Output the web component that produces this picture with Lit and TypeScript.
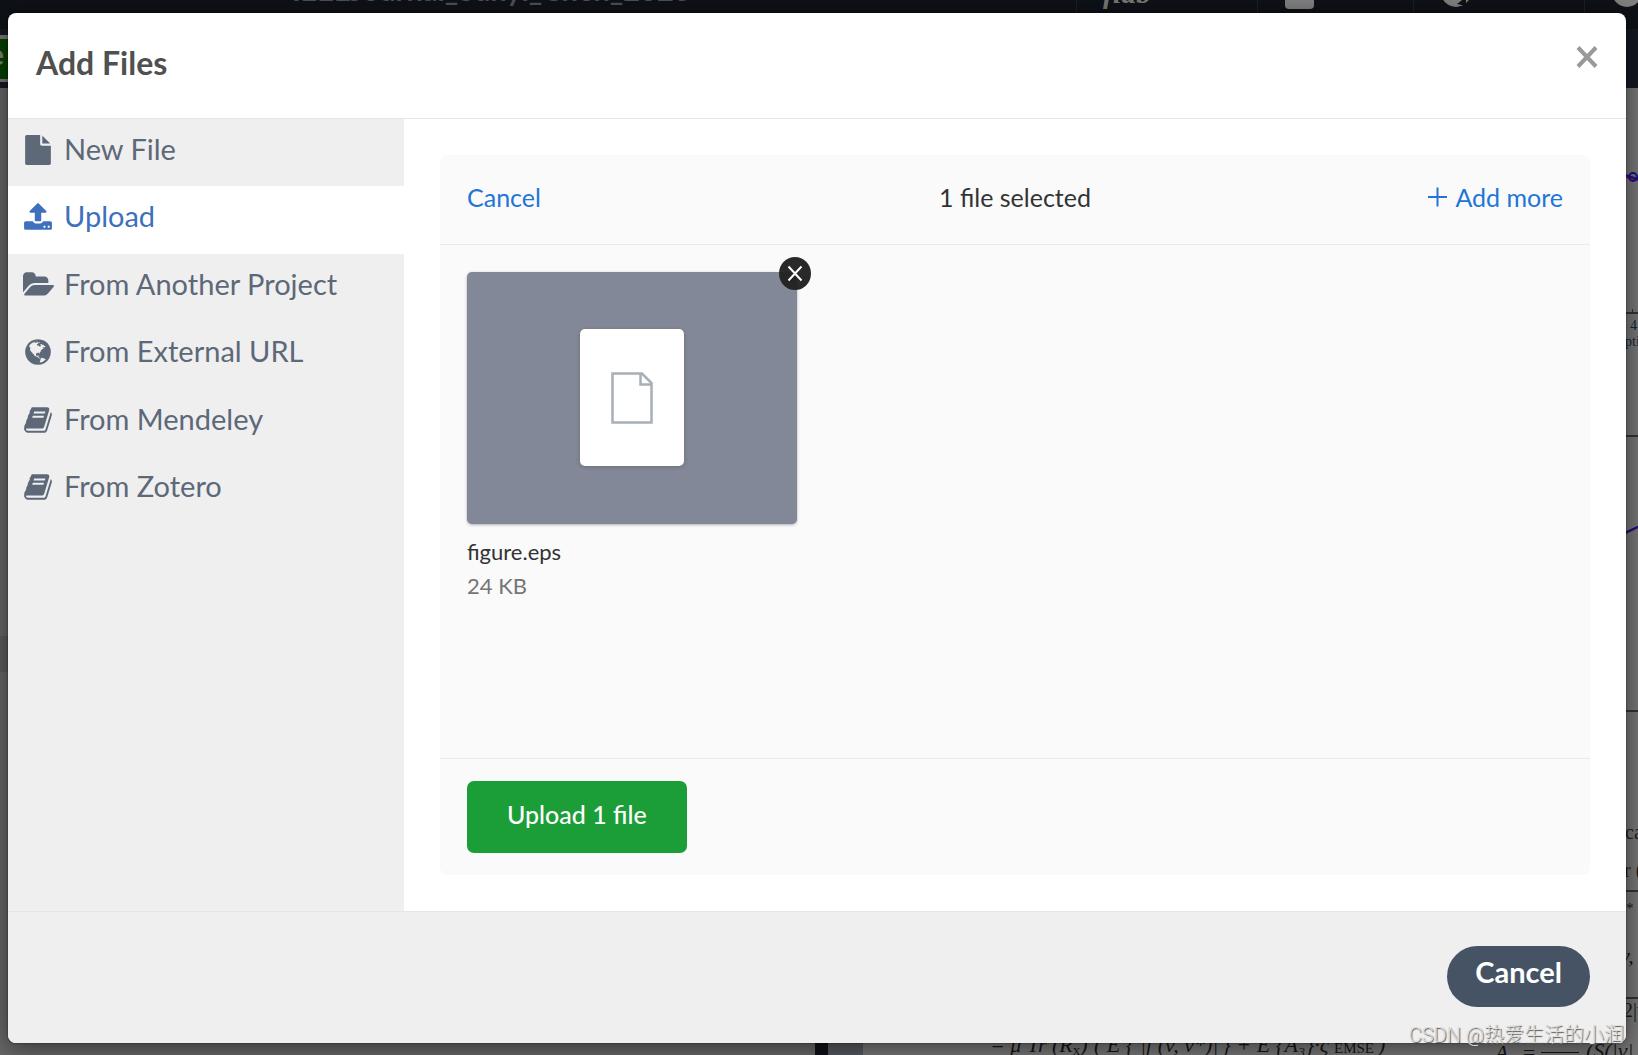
import { LitElement, html, css, svg } from "lit";
import { customElement, state } from "lit/decorators.js";
import { classMap } from "lit/directives/class-map.js";

const ICONS: Record<string, { width: number; path: string }> = {
  file: {
    width: 1792,
    path: "M1152 512v-472q22 14 36 28l408 408q14 14 28 36h-472zm-128 32q0 40 28 68t68 28h544v1056q0 40-28 68t-68 28h-1344q-40 0-68-28t-28-68v-1600q0-40 28-68t68-28h800v544z",
  },
  upload: {
    width: 1792,
    path: "M1344 1472q0-26-19-45t-45-19-45 19-19 45 19 45 45 19 45-19 19-45zm256 0q0-26-19-45t-45-19-45 19-19 45 19 45 45 19 45-19 19-45zm128-224v320q0 40-28 68t-68 28h-1472q-40 0-68-28t-28-68v-320q0-40 28-68t68-28h427q21 56 70.5 92t110.5 36h256q61 0 110.5-36t70.5-92h427q40 0 68 28t28 68zm-325-648q-17 40-59 40h-256v448q0 26-19 45t-45 19h-256q-26 0-45-19t-19-45v-448h-256q-42 0-59-40-17-39 14-69l448-448q18-19 45-19t45 19l448 448q31 30 14 69z",
  },
  folder: {
    width: 1879,
    path: "M1879 952q0 31-31 66l-336 396q-43 51-120.5 86.5t-143.5 35.5h-1088q-34 0-60.5-13t-26.5-43q0-31 31-66l336-396q43-51 120.5-86.5t143.5-35.5h1088q34 0 60.5 13t26.5 43zm-343-344v160h-832q-94 0-197 47.5t-164 119.5l-337 396-5 6q0-4-.5-12.5t-.5-12.5v-960q0-92 66-158t158-66h320q92 0 158 66t66 158v32h544q92 0 158 66t66 158z",
  },
  globe: {
    width: 1792,
    path: "M896 128q209 0 385.5 103t279.5 279.5 103 385.5-103 385.5-279.5 279.5-385.5 103-385.5-103-279.5-279.5-103-385.5 103-385.5 279.5-279.5 385.5-103zm274 521q-2 1-9.5 9.5t-13.5 9.5q2 0 4.5-5t5-11 3.5-7q6-7 22-15 14-6 52-12 34-8 51 11-2-2 9.5-13t14.5-12q3-2 15-4.5t15-7.5l2-22q-12 1-17.5-7t-6.5-21q0 2-6 8 0-7-4.5-8t-11.5 1-9 1q-10-3-15-7.5t-8-16.5-4-15q-2-5-9.5-11t-9.5-10q-1-2-2.5-5.5t-3-6.5-4-5.5-5.5-2.5-7 5-7.5 10-4.5 5q-3-2-6-1.5t-4.5 1-4.5 3-5 3.5q-3 2-8.5 3t-8.5 2q15-5-1-11-10-4-16-3 9-4 7.5-12t-8.5-14h5q-1-4-8.5-8.5t-17.5-8.5-13-6q-8-5-34-9.5t-33-.5q-5 6-4.5 10.5t4 14 3.5 12.5q1 6-5.5 13t-6.5 12q0 7 14 15.5t10 21.5q-3 8-16 16t-16 12q-5 8-1.5 18.5t10.5 16.5q2 2 1.5 4t-3.5 4.5-5.5 4-6.5 3.5l-3 2q-11 5-20.5-6t-13.5-26q-7-25-16-30-23-8-29 1-5-13-41-26-25-9-58-4 6-1 0-15-7-15-19-12 3-6 4-17.5t1-13.5q3-13 12-23 1-1 7-8.5t9.5-13.5.5-6q35 4 50-11 5-5 11.5-17t10.5-17q9-6 14-5.5t14.5 5.5 14.5 5q14 1 15.5-11t-7.5-20q12 1 3-17-4-7-8-9-12-4-27 5-8 4 2 8-1-1-9.5 10.5t-16.5 17.5-16-5q-1-1-5.5-13.5t-9.5-13.5q-8 0-16 15 3-8-11-15t-24-8q19-12-8-27-7-4-20.5-5t-19.5 4q-5 7-5.5 11.5t5 8 10.5 5.5 11.5 4 8.5 3q14 10 8 14-2 1-8.5 3.5t-11.5 4.5-6 4q-3 4 0 14t-2 14q-5-5-9-17.5t-7-16.5q7 9-25 6l-10-1q-4 0-16 2t-20.5 1-13.5-8q-4-8 0-20 1-4 4-2-4-3-11-9.5t-10-8.5q-46 15-94 41 6 1 12-1 5-2 13-6.5t10-5.5q34-14 42-7l5-5q14 16 20 25-7-4-30-1-20 6-22 12 7 12 5 18-4-3-11.5-10t-14.5-11-15-5q-16 0-22 1-146 80-235 222 7 7 12 8 4 1 5 9t2.5 11 11.5-3q9 8 3 19 1-1 44 27 19 17 21 21 3 11-10 18-1-2-9-9t-9-4q-3 5 .5 18.5t10.5 12.5q-7 0-9.5 16t-2.5 35.5-1 23.5l2 1q-3 12 5.5 34.5t21.5 19.5q-13 3 20 43 6 8 8 9 3 2 12 7.5t15 10 10 10.5q4 5 10 22.5t14 23.5q-2 6 9.5 20t10.5 23q-1 0-2.5 1t-2.5 1q3 7 15.5 14t15.5 13q1 3 2 10t3 11 8 2q2-20-24-62-15-25-17-29-3-5-5.5-15.5t-4.5-14.5q2 0 6 1.5t8.5 3.5 7.5 4 2 3q-3 7 2 17.5t12 18.5 17 19 12 13q6 6 14 19.5t0 13.5q9 0 20 10.5t17 19.5q5 8 8 26t5 24q2 7 8.5 13.5t12.5 9.5l16 8 13 7q5 2 18.5 10.5t21.5 11.5q10 4 16 4t14.5-2.5 13.5-3.5q15-2 29 15t21 21q36 19 55 11-2 1 .5 7.5t8 15.5 9 14.5 5.5 8.5q5 6 18 15t18 15q6-4 7-9-3 8 7 20t18 10q14-3 14-32-31 15-49-18 0-1-2.5-5.5t-4-8.5-2.5-8.5 0-7.5 5-3q9 0 10-3.5t-2-12.5-4-13q-1-8-11-20t-12-15q-5 9-16 8t-16-9q0 1-1.5 5.5t-1.5 6.5q-13 0-15-1 1-3 2.5-17.5t3.5-22.5q1-4 5.5-12t7.5-14.5 4-12.5-4.5-9.5-17.5-2.5q-19 1-26 20-1 3-3 10.5t-5 11.5-9 7q-7 3-24 2t-24-5q-13-8-22.5-29t-9.5-37q0-10 2.5-26.5t3-25-5.5-24.5q3-2 9-9.5t10-10.5q2-1 4.5-1.5t4.5 0 4-1.5 3-6q-1-1-4-3-3-3-4-3 7 3 28.5-1.5t27.5 1.5q15 11 22-2 0-1-2.5-9.5t-.5-13.5q5 27 29 9 3 3 15.5 5t17.5 5q3 2 7 5.5t5.5 4.5 5-.5 8.5-6.5q10 14 12 24 11 40 19 44 7 3 11 2t4.5-9.5 0-14-1.5-12.5l-1-8v-18l-1-8q-15-3-18.5-12t1.5-18.5 15-18.5q1-1 8-3.5t15.5-6.5 12.5-8q21-19 15-35 7 0 11-9-1 0-5-3t-7.5-5-4.500-2q9-5 2-16 5-3 7.5-11t7.5-10q9 12 21 2 7-8 1-16 5-7 20.5-10.5t18.5-9.5q7 2 8-2t1-12 3-12q4-5 15-9t13-5l17-11q3-4 0-4 18 2 31-11 10-11-6-20 3-6-3-9.5t-15-5.5q3-1 11.5-.5t10.5-1.5q15-10-7-16-17-5-43 12zm-163 877q206-36 351-189-3-3-12.5-4.5t-12.5-3.5q-18-7-24-8 1-7-2.5-13t-8-9-12.5-8-11-7q-2-2-7-6t-7-5.5-7.5-4.5-8.5-2-10 1l-3 1q-3 1-5.500 2.5t-5.5 3-4 3 0 2.5q-21-17-36-22-5-1-11-5.5t-10.5-7-10-1.5-11.5 7q-5 5-6 15t-2 13q-7-5 0-17.5t2-18.5q-3-6-10.5-4.5t-12 4.5-11.5 8.5-9 6.5-8.5 5.5-8.5 7.5q-3 4-6 12t-5 11q-2-4-11.5-6.5t-9.5-5.5q2 10 4 35t5 38q7 31-12 48-27 25-29 40-4 22 12 26 0 7-8 20.5t-7 21.5q0 6 2 16z",
  },
  book: {
    width: 1792,
    path: "M1703 478q40 57 18 129l-275 906q-19 64-76.5 107.5t-122.5 43.5h-923q-77 0-148.5-53.5t-99.5-131.5q-24-67-2-127 0-4 3-27t4-37q1-8-3-21.5t-3-19.5q2-11 8-21t16.5-23.5 16.5-23.5q23-38 45-91.5t30-91.5q3-10 .5-30t-.5-28q3-11 17-28t17-23q21-36 42-92t25-90q1-9-2.5-32t.5-28q4-13 22-30.5t22-22.5q19-26 42.5-84.5t27.5-96.5q1-8-3-25.5t-2-26.5q2-8 9-18t18-23 17-21q8-12 16.5-30.5t15-35 16-36 19.5-32 26.5-23.5 36-11.5 47.5 5.5l-1 3q38-9 51-9h761q74 0 114 56t18 130l-274 906q-36 119-71.5 153.5t-128.5 34.5h-869q-27 0-38 15-11 16-1 43 24 70 144 70h923q29 0 56-15.5t35-41.5l300-987q7-22 5-57 38 15 59 43zm-1064 2q-4 13 2 22.5t20 9.5h608q13 0 25.5-9.5t16.5-22.5l21-64q4-13-2-22.5t-20-9.5h-608q-13 0-25.5 9.5t-16.5 22.5zm-83 256q-4 13 2 22.5t20 9.5h608q13 0 25.5-9.5t16.5-22.5l21-64q4-13-2-22.5t-20-9.5h-608q-13 0-25.5 9.5t-16.5 22.5z",
  },
};

const SOURCES = [
  { id: "new", label: "New File", icon: "file" },
  { id: "upload", label: "Upload", icon: "upload" },
  { id: "project", label: "From Another Project", icon: "folder" },
  { id: "url", label: "From External URL", icon: "globe" },
  { id: "mendeley", label: "From Mendeley", icon: "book" },
  { id: "zotero", label: "From Zotero", icon: "book" },
];

/* The dimmed editor behind the dialog: top bars, source pane, splitter, PDF page. */
@customElement("editor-backdrop")
class EditorBackdrop extends LitElement {
  static styles = css`
    :host {
      display: flex;
      flex-direction: column;
      overflow: hidden;
      position: relative;
      background: #666;
    }
    .topbar {
      height: 29px;
      background: #0e1116;
    }
    .toolbar {
      height: 59px;
      background: #141922;
    }
    .panes {
      flex: 1;
      display: grid;
      grid-template-columns: 815px 13px 35px 1fr;
    }
    .source {
      background: #666;
    }
    .splitter {
      background: #0e1116;
    }
    .gutter {
      background: #54575d;
    }
    .page {
      background: #757575;
    }
    .art {
      position: absolute;
      top: 0;
      height: 1055px;
    }
    .left {
      left: 0;
      width: 800px;
    }
    .right {
      right: 0;
      width: 800px;
    }
    .name {
      font: bold 29px Lato, sans-serif;
      fill: #4b5059;
    }
    .button-text {
      font: bold 28px Lato, sans-serif;
      fill: #7d7d7d;
    }
    .brand {
      font: italic bold 30px "Liberation Serif", serif;
      fill: #777;
    }
    .math {
      font: italic 22px "Liberation Serif", serif;
      fill: #151515;
    }
    .plain {
      font: 20px "Liberation Serif", serif;
      fill: #1c1c1c;
    }
    .small {
      font: 15px "Liberation Serif", serif;
      fill: #151515;
    }
    .tick {
      font: 14px "Liberation Serif", serif;
      fill: #15233a;
    }
  `;

  render() {
    return html`
      <div class="topbar"></div>
      <div class="toolbar"></div>
      <div class="panes">
        <div class="source"></div>
        <div class="splitter"></div>
        <div class="gutter"></div>
        <div class="page"></div>
      </div>
      <svg class="art left" viewBox="0 0 800 1055" aria-hidden="true">
        <text class="name" x="292" y="1">IEEEJournal_Sunyi_Chen_2023</text>
        <rect x="-20" y="35" width="30" height="47" fill="#777" />
        <rect x="-20" y="39" width="30" height="40" fill="#074000" />
        <text class="button-text" x="-11" y="65">e</text>
        <rect x="0" y="636" width="8" height="36" fill="#5c5c5c" />
      </svg>
      <svg class="art right" viewBox="838 0 800 1055" aria-hidden="true">
        <g fill="#1b2027">
          <rect x="1076" width="1" height="29" />
          <rect x="1257" width="1" height="29" />
          <rect x="1413" width="1" height="29" />
          <rect x="1584" width="1" height="29" />
        </g>
        <text class="brand" x="1103" y="3">flab</text>
        <rect x="1285" y="-16" width="29" height="25" rx="4" fill="#808080" />
        <circle cx="1456" cy="-8" r="15" fill="#808080" />
        <path d="M1457 4l9-7v9z" fill="#0e1116" />
        <circle cx="1627" cy="-8" r="15" fill="#808080" />
        <g fill="none" stroke-width="2">
          <path d="M1622 176l16 4" stroke="#8a1420" />
          <path d="M1622 174l16 5" stroke="#17108c" />
          <circle cx="1633" cy="177" r="4" stroke="#17108c" />
          <path d="M1622 535l16-8" stroke="#8a1420" />
          <path d="M1622 534l16-7" stroke="#17108c" />
        </g>
        <g fill="#333">
          <rect x="1626" y="312" width="12" height="2" />
          <rect x="1632" y="309" width="1" height="4" />
          <rect x="1626" y="435" width="12" height="2" />
          <rect x="1626" y="710" width="12" height="2" />
          <rect x="1626" y="890" width="12" height="2" />
          <rect x="1626" y="997" width="12" height="2" />
        </g>
        <text class="tick" x="1630" y="330">4</text>
        <text class="tick" x="1625" y="346">pti</text>
        <text class="plain" x="1625" y="839">ca</text>
        <text class="plain" x="1624" y="877">r (</text>
        <text class="small" x="1626" y="913">*</text>
        <text class="math" x="1620" y="963">v,</text>
        <text class="plain" x="1623" y="1017">2|v</text>
        <text class="math" x="990" y="1052">= μ Tr (R<tspan class="small" dy="3">x</tspan><tspan dy="-3">)</tspan></text>
        <text class="math" x="1094" y="1052">( E { |f (v, v*)|</text>
        <text class="math" x="1222" y="1052">} + E {A₃}·ς</text>
        <text class="small" x="1334" y="1053">EMSE</text>
        <text class="math" x="1378" y="1052">)</text>
        <text class="math" x="1495" y="1060">A₃ =</text>
        <rect x="1541" y="1052" width="38" height="1" fill="#151515" />
        <text class="math" x="1586" y="1058">(S(|v|</text>
      </svg>
    `;
  }
}

@customElement("app-root")
class AppRoot extends LitElement {
  @state() private active = "upload";

  static styles = css`
    * {
      box-sizing: border-box;
    }
    :host {
      display: grid;
      min-height: 100vh;
      position: relative;
      overflow: hidden;
      font-family: Lato, "Liberation Sans", sans-serif;
      --line: #e5e5e5;
      --grey: #efefef;
      --slate: #5d6879;
      --link: #2275d7;
    }
    editor-backdrop,
    .modal {
      grid-area: 1 / 1;
      min-width: 0;
    }
    button {
      border: 0;
      padding: 0;
      background: none;
      font: inherit;
      color: inherit;
      cursor: pointer;
    }
    svg {
      display: block;
    }
    .modal {
      z-index: 1;
      margin: 13px 12px 12px 8px;
      display: grid;
      grid-template-rows: auto 1fr auto;
      background: #fff;
      border-radius: 8px;
      overflow: hidden;
      box-shadow: 0 4px 24px rgba(0, 0, 0, 0.5), 0 0 2px rgba(0, 0, 0, 0.6);
    }
    .header {
      display: flex;
      justify-content: space-between;
      align-items: flex-start;
      padding: 30px 28px 35px;
      border-bottom: 1px solid var(--line);
    }
    .title {
      margin: 0;
      font-size: 32px;
      line-height: 40px;
      font-weight: 700;
      color: #505050;
    }
    .close {
      padding: 2px 0;
    }
    .main {
      display: grid;
      grid-template-columns: 396px 1fr;
    }
    .sources {
      background: var(--grey);
    }
    .sources ul {
      list-style: none;
      margin: 0;
      padding: 0;
    }
    .source {
      display: flex;
      gap: 8px;
      width: 100%;
      height: 67px;
      padding: 12px 12px;
      font-size: 29px;
      line-height: 36px;
      color: var(--slate);
      text-align: left;
    }
    li:nth-child(even) .source {
      height: 68px;
    }
    .source.active {
      background: #fff;
      color: #3e70bb;
    }
    .glyph {
      display: flex;
      justify-content: center;
      width: 36px;
      padding-top: 4px;
    }
    .content {
      display: grid;
      padding: 36px;
    }
    .uploader {
      display: grid;
      grid-template-rows: auto 1fr auto;
      background: #fafafa;
      border-radius: 8px;
      font-size: 25px;
      line-height: 30px;
    }
    .bar {
      display: grid;
      grid-template-columns: 1fr auto 1fr;
      padding: 27px 27px 32px;
      border-bottom: 1px solid #e9e9e9;
      color: #333;
    }
    .link {
      color: var(--link);
      justify-self: start;
    }
    .add {
      display: flex;
      gap: 8px;
      justify-self: end;
    }
    .add svg {
      margin-top: 5px;
    }
    .files {
      list-style: none;
      margin: 0;
      padding: 27px;
    }
    .file {
      width: 330px;
      position: relative;
      font-size: 22px;
      line-height: 34px;
    }
    .preview {
      display: grid;
      place-items: center;
      height: 252px;
      padding-bottom: 1px;
      margin-bottom: 11px;
      background: #838898;
      border-radius: 5px;
      box-shadow: 0 1px 3px rgba(0, 0, 0, 0.3);
    }
    .sheet {
      display: grid;
      place-items: center;
      width: 104px;
      height: 137px;
      background: #fff;
      border-radius: 5px;
      box-shadow: 0 1px 4px rgba(0, 0, 0, 0.2);
    }
    .remove {
      position: absolute;
      top: -15px;
      right: -14px;
    }
    .filename {
      color: #333;
    }
    .size {
      color: #757575;
    }
    .actions {
      padding: 22px 27px;
      border-top: 1px solid #e9e9e9;
    }
    .upload {
      padding: 18px 40px 24px;
      border-radius: 7px;
      background: #1b9e38;
      color: #fff;
      font-weight: 500;
    }
    .footer {
      display: flex;
      justify-content: flex-end;
      padding: 34px 36px 36px;
      background: var(--grey);
      border-top: 1px solid var(--line);
    }
    .dismiss {
      padding: 8px 28px 17px;
      border-radius: 31px;
      background: #465365;
      color: #fff;
      font-size: 29px;
      line-height: 36px;
      font-weight: 700;
    }
    .watermark {
      position: absolute;
      z-index: 2;
      right: 14px;
      bottom: 8px;
      font: 300 20px/24px Roboto, "Noto Sans CJK SC", sans-serif;
      color: #ddd;
      text-shadow: 1px 1px 1px #555;
      pointer-events: none;
    }
  `;

  private icon(name: string) {
    const { width, path } = ICONS[name];
    return html`<svg width=${Math.round((width / 1792) * 30)} height="30" viewBox="0 0 ${width} 1792" fill="currentColor" aria-hidden="true">
      ${svg`<path d=${path} />`}
    </svg>`;
  }

  render() {
    return html`
      <editor-backdrop></editor-backdrop>
      <section class="modal" role="dialog" aria-labelledby="title">
        <header class="header">
          <h1 class="title" id="title">Add Files</h1>
          <button class="close" aria-label="Close">
            <svg width="22" height="24" viewBox="0 0 22 24" fill="none" stroke="#999" stroke-width="4">
              <path d="M2 2.500L20 21.500M20 2.500L2 21.500" />
            </svg>
          </button>
        </header>
        <div class="main">
          <nav class="sources">
            <ul>
              ${SOURCES.map(
                (s) => html`<li>
                  <button
                    class=${classMap({ source: true, active: s.id === this.active })}
                    @click=${() => (this.active = s.id)}
                  >
                    <span class="glyph">${this.icon(s.icon)}</span>
                    <span>${s.label}</span>
                  </button>
                </li>`
              )}
            </ul>
          </nav>
          <div class="content">
            <div class="uploader">
              <div class="bar">
                <button class="link">Cancel</button>
                <span>1 file selected</span>
                <button class="link add">
                  <svg width="19" height="20" viewBox="0 0 19 20" stroke="currentColor" stroke-width="2" aria-hidden="true">
                    <path d="M9.500 0.500V19.500M0 10H19" />
                  </svg>
                  <span>Add more</span>
                </button>
              </div>
              <ul class="files">
                <li class="file">
                  <div class="preview">
                    <div class="sheet">
                      <svg width="42" height="52" viewBox="0 0 42 52" fill="none" stroke="#a7afb7" stroke-width="2.500" aria-hidden="true">
                        <path d="M1.500 1.500H31L40.500 11V50.500H1.500zM29.500 1.500V12.500H40.500" />
                      </svg>
                    </div>
                  </div>
                  <button class="remove" aria-label="Remove file">
                    <svg width="32" height="33" viewBox="0 0 32 33">
                      <ellipse cx="16" cy="16.500" rx="16" ry="16.500" fill="#222" fill-opacity="0.970" />
                      <path d="M9.500 9.500L22.500 23.500M22.500 9.500L9.500 23.500" stroke="#fff" stroke-width="2" />
                    </svg>
                  </button>
                  <div class="filename">figure.eps</div>
                  <div class="size">24 KB</div>
                </li>
              </ul>
              <div class="actions">
                <button class="upload">Upload 1 file</button>
              </div>
            </div>
          </div>
        </div>
        <footer class="footer">
          <button class="dismiss">Cancel</button>
        </footer>
      </section>
      <div class="watermark">CSDN @热爱生活的小润</div>
    `;
  }
}
